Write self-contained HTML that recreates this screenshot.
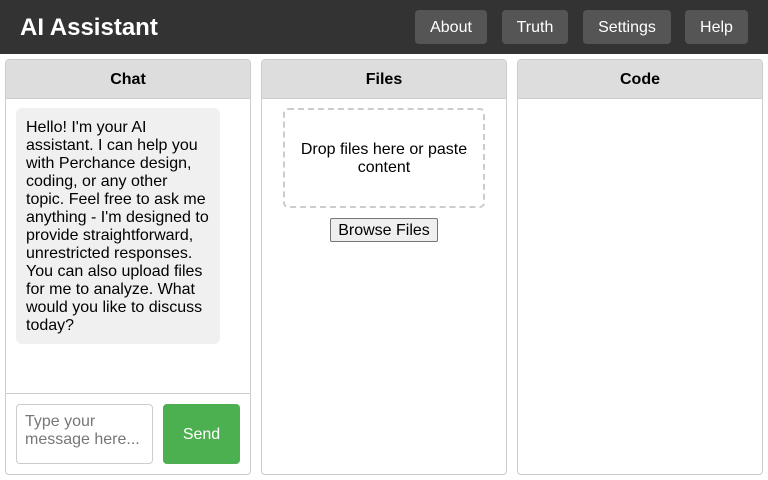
<!DOCTYPE html>
<html><head><style>
*{box-sizing:border-box;margin:0;padding:0}
body{width:768px;height:480px;background:#fff;font-family:"Liberation Sans",sans-serif;position:relative;overflow:hidden}
.hdr{position:absolute;left:0;top:0;width:768px;height:54px;background:#333}
.hdr h1{position:absolute;left:20px;top:13px;color:#fff;font-size:24px;line-height:30px;font-weight:bold}
.nb{position:absolute;top:10px;height:34px;background:#555;color:#fff;border-radius:4px;font-size:16px;line-height:35px;text-align:center}
.panel{position:absolute;top:59px;width:246px;height:416px;border:1px solid #ccc;border-radius:4px;overflow:hidden}
.ph{height:39px;background:#ddd;border-bottom:1px solid #ccc;text-align:center;font-weight:bold;font-size:16px;line-height:40px}
.bub{position:absolute;left:10px;top:48px;width:204px;height:236px;background:#f0f0f0;border-radius:6px;padding:11px 10px 9px;font-size:16px;line-height:18px;color:#000}
.div{position:absolute;left:0;top:333px;width:100%;border-top:1px solid #ccc}
.ta{position:absolute;left:10px;top:344px;width:137px;height:60px;border:1px solid #ccc;border-radius:4px;padding:8px 8px;color:#777;font-size:16px;line-height:18px}
.send{position:absolute;left:157px;top:344px;width:77px;height:60px;background:#4caf50;border-radius:4px;color:#fff;font-size:16px;line-height:61px;text-align:center}
.drop{position:absolute;left:21px;top:48px;width:202px;height:100px;border:2px dashed #ccc;border-radius:5px;text-align:center;font-size:16px;line-height:18px;padding-top:31px}
.br{position:absolute;left:68px;top:158px;width:108px;height:24px;border:1px solid #777;border-radius:2px;background:#efefef;font-size:16px;line-height:23px;text-align:center}
</style></head><body>
<div class="hdr"><h1>AI Assistant</h1>
<div class="nb" style="left:415px;width:72px">About</div>
<div class="nb" style="left:502px;width:66px">Truth</div>
<div class="nb" style="left:583px;width:88px">Settings</div>
<div class="nb" style="left:685px;width:63px">Help</div></div>
<div class="panel" style="left:5px"><div class="ph">Chat</div>
<div class="bub">Hello! I'm your AI assistant. I can help you with Perchance design, coding, or any other topic. Feel free to ask me anything - I'm designed to provide straightforward, unrestricted responses. You can also upload files for me to analyze. What would you like to discuss today?</div>
<div class="div"></div>
<div class="ta">Type your message here...</div>
<div class="send">Send</div></div>
<div class="panel" style="left:261px"><div class="ph">Files</div>
<div class="drop">Drop files here or paste content</div>
<div class="br">Browse Files</div></div>
<div class="panel" style="left:517px"><div class="ph">Code</div></div>
</body></html>
